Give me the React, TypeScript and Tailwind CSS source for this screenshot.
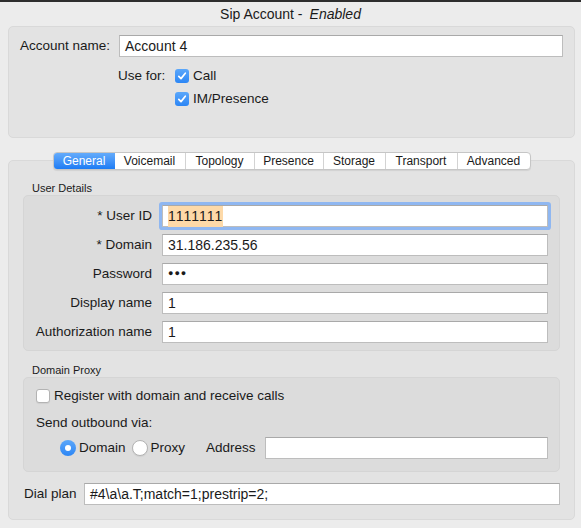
import React from 'react'

const tabs = [
  { name: 'General', w: 'w-[61px]' },
  { name: 'Voicemail', w: 'w-[70px]' },
  { name: 'Topology', w: 'w-[69px]' },
  { name: 'Presence', w: 'w-[69px]' },
  { name: 'Storage', w: 'w-[62px]' },
  { name: 'Transport', w: 'w-[72px]' },
  { name: 'Advanced', w: 'w-[73px]' },
]

function Field({ children, className = '' }: { children?: React.ReactNode; className?: string }) {
  return (
    <div
      className={`flex h-[22px] flex-1 items-center border border-[#bdbdbd] border-t-[#a9a9a9] bg-white pl-[5px] text-[14px] text-[#1a1a1a] ${className}`}
    >
      {children}
    </div>
  )
}

function Check({ checked }: { checked: boolean }) {
  if (!checked) {
    return <div className="h-[14px] w-[14px] shrink-0 rounded-[3px] border border-[#b3b3b3] bg-white shadow-[0_1px_1px_rgba(0,0,0,0.06)]" />
  }
  return (
    <div className="flex h-[14px] w-[14px] shrink-0 items-center justify-center rounded-[3px] bg-gradient-to-b from-[#5ba7fa] to-[#2b86f5]">
      <svg width="10" height="10" viewBox="0 0 10 10" fill="none">
        <path d="M1.8 5.3 L4 7.6 L8.3 2.2" stroke="white" strokeWidth="1.7" strokeLinecap="round" strokeLinejoin="round" />
      </svg>
    </div>
  )
}

function Radio({ selected }: { selected: boolean }) {
  if (selected) {
    return (
      <div className="flex h-[16px] w-[16px] shrink-0 items-center justify-center rounded-full bg-gradient-to-b from-[#5ba7fa] to-[#2b86f5]">
        <div className="h-[6px] w-[6px] rounded-full bg-white" />
      </div>
    )
  }
  return <div className="h-[16px] w-[16px] shrink-0 rounded-full border border-[#b3b3b3] bg-white shadow-[0_1px_1px_rgba(0,0,0,0.06)]" />
}

function Row({ label, children }: { label: string; children: React.ReactNode }) {
  return (
    <div className="flex h-[22px] items-center">
      <div className="w-[128px] text-right text-[13.5px]">{label}</div>
      <div className="ml-[10px] flex flex-1">{children}</div>
    </div>
  )
}

export default function App() {
  return (
    <div className="h-[528px] w-[581px] overflow-hidden border-t-2 border-[#2e2e2e] bg-[#ececec] font-['Liberation_Sans',Arial,sans-serif] text-[#1a1a1a]">
      {/* window title */}
      <div className="flex h-[24px] items-center justify-center text-[14px]">
        <span>Sip Account -</span>
        <span className="ml-[7px] italic">Enabled</span>
      </div>

      {/* account box */}
      <div className="ml-2 mr-[6px] h-[112px] rounded-[5px] border border-[#d9d9d9] bg-[#e3e3e3] pl-[11px] pr-[11px] pt-[8px]">
        <div className="flex items-center">
          <div className="w-[99px] text-[13.5px]">Account name:</div>
          <Field>Account 4</Field>
        </div>
        <div className="ml-[98px] mt-[12px] flex">
          <div className="w-[57px] text-[13.5px] leading-[14px]">Use for:</div>
          <div className="flex flex-col gap-[9px]">
            <div className="flex items-center gap-[4px] text-[13.5px] leading-[14px]">
              <Check checked />
              <span>Call</span>
            </div>
            <div className="flex items-center gap-[4px] text-[13.5px] leading-[14px]">
              <Check checked />
              <span>IM/Presence</span>
            </div>
          </div>
        </div>
      </div>

      {/* tabs + settings */}
      <div className="ml-2 mr-[6px] mt-[14px]">
        <div className="relative z-10 -mb-[10px] flex justify-center">
          <div className="flex h-[18px] overflow-hidden rounded-[4px] border border-[#c6c6c6] bg-white text-[12px] shadow-[0_1px_1px_rgba(0,0,0,0.08)]">
            {tabs.map((t, i) =>
              i === 0 ? (
                <div
                  key={t.name}
                  className={`${t.w} flex items-center justify-center bg-gradient-to-b from-[#63abfb] to-[#1c7cf4] text-white`}
                >
                  {t.name}
                </div>
              ) : (
                <div
                  key={t.name}
                  className={`${t.w} flex items-center justify-center ${i > 1 ? 'border-l border-[#d3d3d3]' : ''}`}
                >
                  {t.name}
                </div>
              )
            )}
          </div>
        </div>

        <div className="rounded-[5px] border border-[#d9d9d9] bg-[#e3e3e3] px-[14px] pb-[14px] pt-[20px]">
          <div className="pl-[9px] text-[11px] leading-[14px]">User Details</div>
          <div className="flex flex-col gap-[7px] rounded-[5px] border border-[#d5d5d5] bg-[#dcdcdc] pb-[7px] pr-[11px] pt-[9px]">
            <Row label="* User ID">
              <Field className="rounded-[1px] border-[#79a6e6] border-t-[#79a6e6] shadow-[0_0_0_3px_#8fb7f1]">
                <span className="bg-[#fdd9a8] tracking-[1px]">1111111</span>
              </Field>
            </Row>
            <Row label="* Domain">
              <Field>31.186.235.56</Field>
            </Row>
            <Row label="Password">
              <Field>
                <span className="text-[9px] tracking-[1px]">●●●</span>
              </Field>
            </Row>
            <Row label="Display name">
              <Field>1</Field>
            </Row>
            <Row label="Authorization name">
              <Field>1</Field>
            </Row>
          </div>

          <div className="mt-[12px] pl-[9px] text-[11px] leading-[14px]">Domain Proxy</div>
          <div className="flex flex-col rounded-[5px] border border-[#d5d5d5] bg-[#dcdcdc] pb-[12px] pl-[12px] pr-[11px] pt-[11px]">
            <div className="flex h-[14px] items-center gap-[4px] text-[13.5px]">
              <Check checked={false} />
              <span>Register with domain and receive calls</span>
            </div>
            <div className="mt-[12px] flex h-[16px] items-center text-[13.5px]">Send outbound via:</div>
            <div className="mt-[6px] flex h-[22px] items-center pl-[24px] text-[13.5px]">
              <Radio selected />
              <span className="ml-[3px]">Domain</span>
              <div className="ml-[6px]">
                <Radio selected={false} />
              </div>
              <span className="ml-[3px]">Proxy</span>
              <span className="ml-[21px]">Address</span>
              <Field className="ml-[9px] h-[21px]" />
            </div>
          </div>

          <div className="mt-[11px] flex items-center pl-[1px]">
            <div className="w-[60px] text-[13.5px]">Dial plan</div>
            <Field className="h-[21px]">{'#4\\a\\a.T;match=1;prestrip=2;'}</Field>
          </div>
        </div>
      </div>
    </div>
  )
}
